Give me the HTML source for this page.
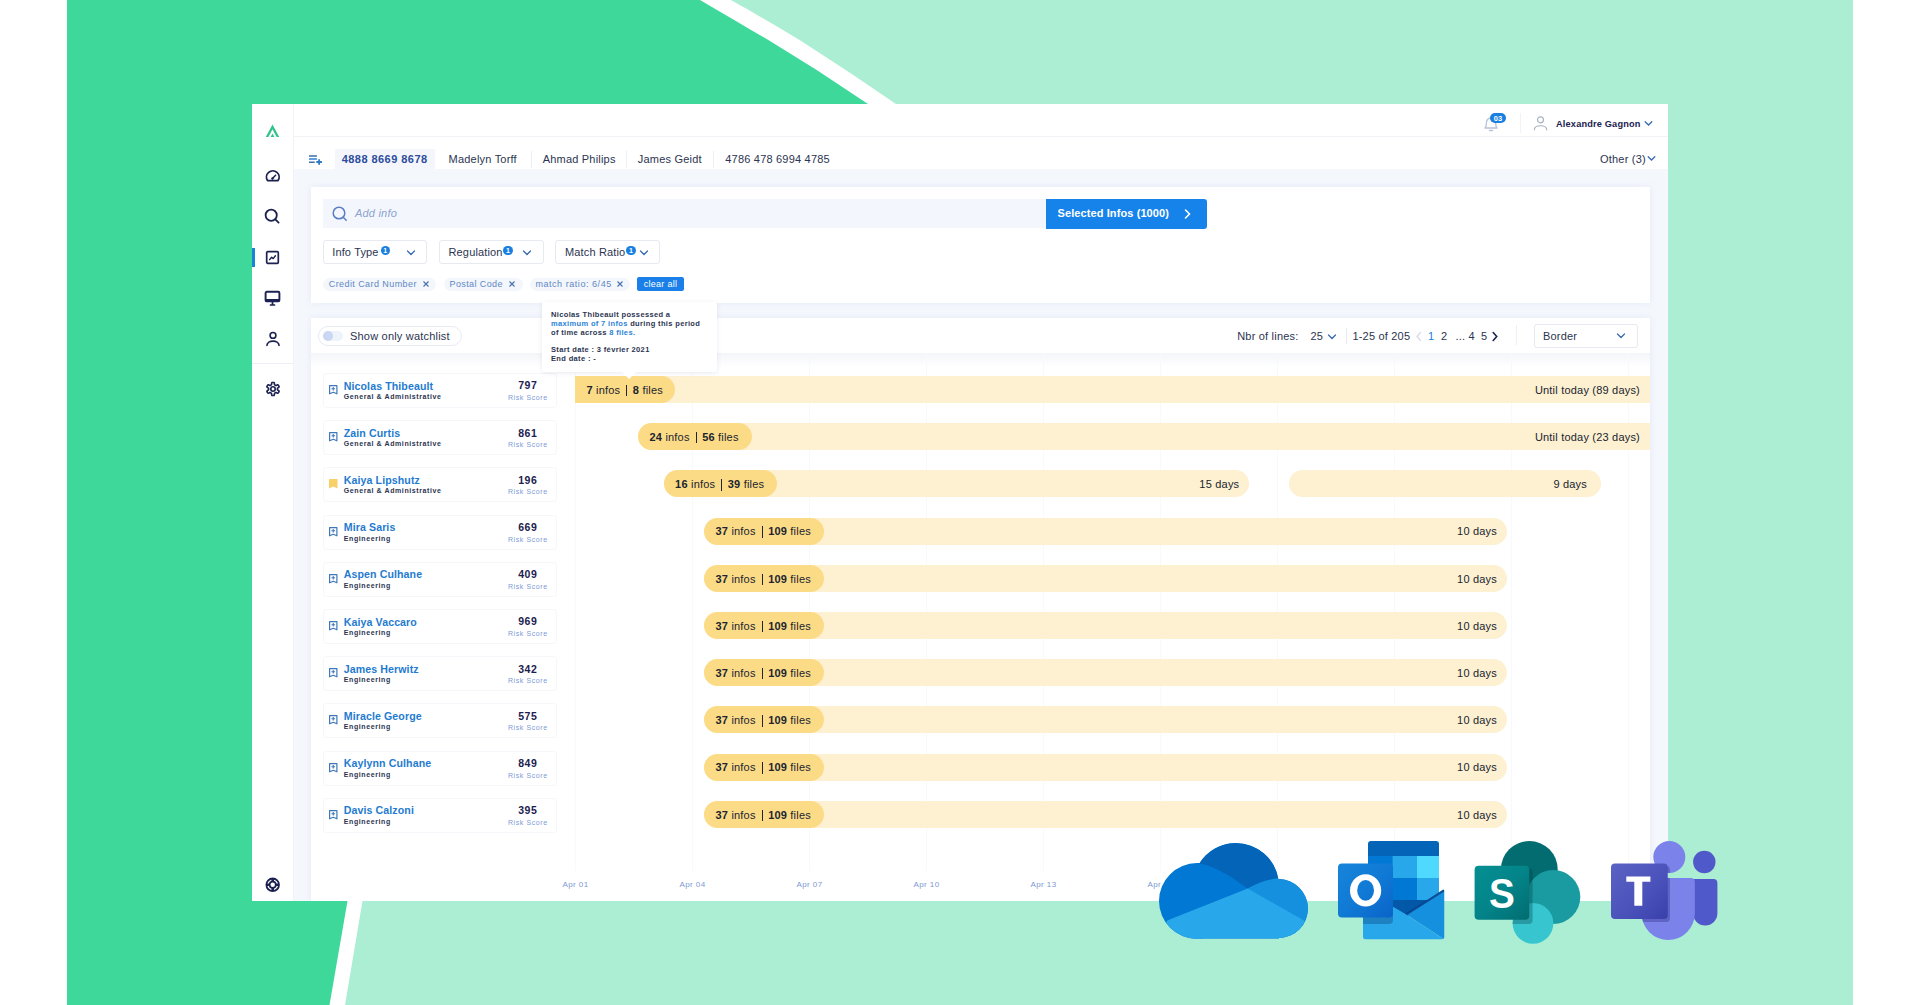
<!DOCTYPE html>
<html><head><meta charset="utf-8">
<style>
*{margin:0;padding:0;box-sizing:border-box}
html,body{width:1920px;height:1005px;overflow:hidden;background:#fff;font-family:"Liberation Sans", sans-serif;color:#232c45}
.a{position:absolute}
.t{position:absolute;white-space:nowrap;line-height:1}
</style></head><body>
<svg class="a" style="left:0;top:0" width="1920" height="1005" viewBox="0 0 1920 1005">
  <rect x="67" y="0" width="1786" height="1005" fill="#fff"/>
  <polygon points="67,0 700,0 717,10 734.2,20 751,30 768.3,40 792.5,55 816.7,70 868,104 868,110 347.5,901 329.5,1005 67,1005" fill="#3ed89a"/>
  <polygon points="730.8,0 748.75,10 774.5,25 799.6,40 826.5,57.5 853.3,75 896,104 896,110 362.5,901 345,1005 1853,1005 1853,0" fill="#abeed3"/>
</svg>
<div class="a" style="left:252px;top:104px;width:1416px;height:797px;background:#f4f7fc;"></div>
<div class="a" style="left:252px;top:104px;width:42px;height:797px;background:#fff;border-right:1px solid #f1f3f8"></div>
<div class="a" style="left:294px;top:104px;width:1374px;height:33px;background:#fff;border-bottom:1px solid #f0f2f6"></div>
<div class="a" style="left:294px;top:137px;width:1374px;height:32px;background:#fff;"></div>
<svg class="a" style="left:264px;top:123px" width="17" height="16" viewBox="0 0 17 16"><path d="M8.5 1.6 L15.2 14 L12.6 14 L8.5 6.3 L4.4 14 L1.8 14 Z" fill="#31c48a"/><path d="M8.5 10.4 L10.4 14 L6.6 14 Z" fill="#31c48a"/></svg>
<svg class="a" style="left:264px;top:168px" width="18" height="16" viewBox="0 0 18 16"><path d="M3.56 12.6 A6.3 6.3 0 1 1 14.04 12.6 Z" fill="none" stroke="#1b2150" stroke-width="1.8" stroke-linejoin="round"/><path d="M8.4 10.6 L11.6 7.2" stroke="#1b2150" stroke-width="1.5" stroke-linecap="round"/><circle cx="8.5" cy="10.5" r="1.2" fill="#1b2150"/></svg>
<svg class="a" style="left:264px;top:208px" width="17" height="17" viewBox="0 0 17 17"><circle cx="7.2" cy="7.2" r="5.6" fill="none" stroke="#1b2150" stroke-width="1.8"/><path d="M11.3 11.3 L14.6 14.6" stroke="#1b2150" stroke-width="1.8" stroke-linecap="round"/></svg>
<div class="a" style="left:252px;top:248px;width:3px;height:19px;background:#1a84d8;"></div>
<svg class="a" style="left:265px;top:250px" width="15" height="15" viewBox="0 0 15 15"><rect x="1.7" y="1.7" width="11.6" height="11.6" rx="1" fill="none" stroke="#1b2150" stroke-width="1.7"/><path d="M4.6 9.6 L6.6 7.2 L8.2 8.6 L10.4 5.8" fill="none" stroke="#1b2150" stroke-width="1.4" stroke-linecap="round" stroke-linejoin="round"/></svg>
<svg class="a" style="left:264px;top:290px" width="17" height="17" viewBox="0 0 17 17"><rect x="1.6" y="1.8" width="13.8" height="9.6" rx="1.2" fill="none" stroke="#1b2150" stroke-width="1.9"/><rect x="1.6" y="9" width="13.8" height="2.6" fill="#1b2150"/><path d="M8.5 12 V14.6 M5.8 15 H11.2" stroke="#1b2150" stroke-width="1.7"/></svg>
<svg class="a" style="left:265px;top:331px" width="16" height="16" viewBox="0 0 16 16"><circle cx="8" cy="4.4" r="2.9" fill="none" stroke="#1b2150" stroke-width="1.6"/><path d="M2 14.3 C2.2 8.6 13.8 8.6 14 14.3" fill="none" stroke="#1b2150" stroke-width="1.7" stroke-linecap="round"/></svg>
<div class="a" style="left:252px;top:363px;width:41px;height:1px;background:#eceff4;"></div>
<svg class="a" style="left:264.8px;top:380.7px" width="16" height="16" viewBox="0 0 16 16"><path d="M8.00 1.45 L8.34 1.46 L8.68 1.49 L9.02 1.53 L9.29 1.92 L9.42 2.69 L9.48 3.45 L9.59 3.85 L9.81 3.93 L10.02 4.04 L10.22 4.15 L10.42 4.27 L10.62 4.40 L10.80 4.54 L11.20 4.44 L11.89 4.11 L12.62 3.84 L13.09 3.88 L13.30 4.15 L13.49 4.43 L13.67 4.72 L13.84 5.03 L13.98 5.34 L14.11 5.65 L13.91 6.08 L13.31 6.58 L12.68 7.00 L12.40 7.30 L12.43 7.53 L12.44 7.77 L12.45 8.00 L12.44 8.23 L12.43 8.47 L12.40 8.70 L12.68 9.00 L13.31 9.42 L13.91 9.92 L14.11 10.35 L13.98 10.66 L13.84 10.97 L13.67 11.27 L13.49 11.57 L13.30 11.85 L13.09 12.12 L12.62 12.16 L11.89 11.89 L11.20 11.56 L10.80 11.46 L10.62 11.60 L10.42 11.73 L10.22 11.85 L10.02 11.96 L9.81 12.07 L9.59 12.15 L9.48 12.55 L9.42 13.31 L9.29 14.08 L9.02 14.47 L8.68 14.51 L8.34 14.54 L8.00 14.55 L7.66 14.54 L7.32 14.51 L6.98 14.47 L6.71 14.08 L6.58 13.31 L6.52 12.55 L6.41 12.15 L6.19 12.07 L5.98 11.96 L5.78 11.85 L5.58 11.73 L5.38 11.60 L5.20 11.46 L4.80 11.56 L4.11 11.89 L3.38 12.16 L2.91 12.12 L2.70 11.85 L2.51 11.57 L2.33 11.28 L2.16 10.97 L2.02 10.66 L1.89 10.35 L2.09 9.92 L2.69 9.42 L3.32 9.00 L3.60 8.70 L3.57 8.47 L3.56 8.23 L3.55 8.00 L3.56 7.77 L3.57 7.53 L3.60 7.30 L3.32 7.00 L2.69 6.58 L2.09 6.08 L1.89 5.65 L2.02 5.34 L2.16 5.03 L2.33 4.72 L2.51 4.43 L2.70 4.15 L2.91 3.88 L3.38 3.84 L4.11 4.11 L4.80 4.44 L5.20 4.54 L5.38 4.40 L5.58 4.27 L5.78 4.15 L5.98 4.04 L6.19 3.93 L6.41 3.85 L6.52 3.45 L6.58 2.69 L6.71 1.92 L6.98 1.53 L7.32 1.49 L7.66 1.46 Z" fill="none" stroke="#1b2150" stroke-width="1.6" stroke-linejoin="round"/><circle cx="8" cy="8" r="2.2" fill="none" stroke="#1b2150" stroke-width="1.6"/></svg>
<svg class="a" style="left:264px;top:876px" width="18" height="18" viewBox="0 0 18 18"><circle cx="8.7" cy="8.8" r="6.3" fill="none" stroke="#1b2150" stroke-width="1.8"/><circle cx="8.7" cy="8.8" r="3.1" fill="none" stroke="#1b2150" stroke-width="1.7"/><path d="M8.7 2.5 V5.8 M8.7 11.8 V15.1 M2.4 8.8 H5.7 M11.7 8.8 H15" stroke="#1b2150" stroke-width="2.6"/></svg>
<svg class="a" style="left:1482px;top:115px" width="18" height="18" viewBox="0 0 18 18"><path d="M3 13 C4.5 11.5 4.2 9 4.5 7 C5 4.2 7 3 9 3 C11 3 13 4.2 13.5 7 C13.8 9 13.5 11.5 15 13 Z" fill="none" stroke="#b7c3da" stroke-width="1.3" stroke-linejoin="round"/><path d="M7.5 15.5 H10.5" stroke="#b7c3da" stroke-width="1.3" stroke-linecap="round"/></svg>
<div class="a" style="left:1490px;top:113px;width:16px;height:10px;background:#1a7fe0;border-radius:5px"></div>
<div class="t" style="left:1498.00px;top:114.95px;font-size:7.5px;color:#fff;font-weight:700;transform:translateX(-50%);">03</div>
<div class="a" style="left:1520px;top:113px;width:1px;height:20px;background:#f2f3f6;"></div>
<svg class="a" style="left:1532px;top:115px" width="17" height="17" viewBox="0 0 17 17"><circle cx="8.5" cy="4.8" r="3" fill="none" stroke="#aab3c4" stroke-width="1.2"/><path d="M2.3 14.8 C2.5 9.4 14.5 9.4 14.7 14.8" fill="none" stroke="#aab3c4" stroke-width="1.2" stroke-linecap="round"/></svg>
<div class="t" style="left:1556.00px;top:119.81px;font-size:9.2px;color:#1b2150;font-weight:700;letter-spacing:0.18px;">Alexandre Gagnon</div>
<svg class="a" style="left:1644px;top:120px" width="9" height="7" viewBox="0 0 9 7"><path d="M1.2 1.8 L4.5 5 L7.8 1.8" fill="none" stroke="#3a6ab0" stroke-width="1.3" stroke-linecap="round"/></svg>
<svg class="a" style="left:307px;top:153px" width="17" height="14" viewBox="0 0 17 14"><path d="M2 2.9 H9.9 M2 9.2 H7.7" stroke="#3a6fa8" stroke-width="1.5"/><path d="M2 6 H9.9" stroke="#2f7fd6" stroke-width="1.5"/><path d="M9.3 9 H14.9 M12.1 6.2 V11.8" stroke="#2d7bc4" stroke-width="1.8"/></svg>
<div class="a" style="left:335px;top:149px;width:100px;height:20px;background:#f4f6fb;"></div>
<div class="t" style="left:341.70px;top:153.79px;font-size:11px;color:#2c4c9c;font-weight:700;letter-spacing:0.45px;">4888 8669 8678</div>
<div class="t" style="left:448.60px;top:153.79px;font-size:11px;color:#2b3450;letter-spacing:0.2px;">Madelyn Torff</div>
<div class="t" style="left:542.70px;top:153.79px;font-size:11px;color:#2b3450;letter-spacing:0.2px;">Ahmad Philips</div>
<div class="t" style="left:637.80px;top:153.79px;font-size:11px;color:#2b3450;letter-spacing:0.2px;">James Geidt</div>
<div class="t" style="left:725.30px;top:153.79px;font-size:11px;color:#2b3450;letter-spacing:0.2px;">4786 478 6994 4785</div>
<div class="a" style="left:531px;top:151px;width:1px;height:17px;background:#eceff4;"></div>
<div class="a" style="left:626px;top:151px;width:1px;height:17px;background:#eceff4;"></div>
<div class="a" style="left:713px;top:151px;width:1px;height:17px;background:#eceff4;"></div>
<div class="t" style="left:1600.00px;top:154.09px;font-size:11px;color:#2b3450;letter-spacing:0.2px;">Other (3)</div>
<svg class="a" style="left:1647px;top:155px" width="9" height="7" viewBox="0 0 9 7"><path d="M1.2 1.8 L4.5 5 L7.8 1.8" fill="none" stroke="#3a6ab0" stroke-width="1.3" stroke-linecap="round"/></svg>
<div class="a" style="left:311px;top:187px;width:1339px;height:116px;background:#fff;box-shadow:0 0 6px rgba(205,213,235,0.35)"></div>
<div class="a" style="left:323px;top:199px;width:723px;height:29px;background:#f3f7fd;"></div>
<svg class="a" style="left:331px;top:205px" width="18" height="18" viewBox="0 0 18 18"><circle cx="8" cy="8" r="5.8" fill="none" stroke="#5a7cc4" stroke-width="1.5"/><path d="M12.2 12.2 L15.2 15.2" stroke="#5a7cc4" stroke-width="1.5" stroke-linecap="round"/></svg>
<div class="t" style="left:355.00px;top:208.19px;font-size:11px;color:#8da2cf;letter-spacing:0.2px;font-style:italic;">Add info</div>
<div class="a" style="left:1046px;top:199px;width:161px;height:30px;background:#1683eb;border-radius:0 3px 3px 0"></div>
<div class="t" style="left:1057.50px;top:208.49px;font-size:11px;color:#fff;font-weight:700;letter-spacing:0.1px;">Selected Infos (1000)</div>
<svg class="a" style="left:1183px;top:208px" width="9" height="12" viewBox="0 0 9 12"><path d="M2.5 2 L6.5 6 L2.5 10" fill="none" stroke="#fff" stroke-width="1.6" stroke-linecap="round"/></svg>
<div class="a" style="left:323px;top:240px;width:104px;height:24px;background:#fff;border:1px solid #e6e9ef;border-radius:3px"></div>
<div class="t" style="left:332.20px;top:246.59px;font-size:11px;color:#2b3450;letter-spacing:0.15px;">Info Type</div>
<div class="a" style="left:380.6px;top:245.7px;width:9.4px;height:9.4px;border-radius:50%;background:#1a7fe0"></div>
<div class="t" style="left:385.30px;top:247.27px;font-size:7px;color:#fff;font-weight:700;transform:translateX(-50%);">1</div>
<svg class="a" style="left:406px;top:249px" width="10" height="8" viewBox="0 0 10 8"><path d="M1.5 2 L5 5.5 L8.5 2" fill="none" stroke="#3a6ab0" stroke-width="1.3" stroke-linecap="round"/></svg>
<div class="a" style="left:439px;top:240px;width:105px;height:24px;background:#fff;border:1px solid #e6e9ef;border-radius:3px"></div>
<div class="t" style="left:448.50px;top:246.59px;font-size:11px;color:#2b3450;letter-spacing:0.15px;">Regulation</div>
<div class="a" style="left:503.3px;top:245.7px;width:9.4px;height:9.4px;border-radius:50%;background:#1a7fe0"></div>
<div class="t" style="left:508.00px;top:247.27px;font-size:7px;color:#fff;font-weight:700;transform:translateX(-50%);">1</div>
<svg class="a" style="left:522px;top:249px" width="10" height="8" viewBox="0 0 10 8"><path d="M1.5 2 L5 5.5 L8.5 2" fill="none" stroke="#3a6ab0" stroke-width="1.3" stroke-linecap="round"/></svg>
<div class="a" style="left:555px;top:240px;width:105px;height:24px;background:#fff;border:1px solid #e6e9ef;border-radius:3px"></div>
<div class="t" style="left:565.00px;top:246.59px;font-size:11px;color:#2b3450;letter-spacing:0.15px;">Match Ratio</div>
<div class="a" style="left:626.3px;top:245.7px;width:9.4px;height:9.4px;border-radius:50%;background:#1a7fe0"></div>
<div class="t" style="left:631.00px;top:247.27px;font-size:7px;color:#fff;font-weight:700;transform:translateX(-50%);">1</div>
<svg class="a" style="left:639px;top:249px" width="10" height="8" viewBox="0 0 10 8"><path d="M1.5 2 L5 5.5 L8.5 2" fill="none" stroke="#3a6ab0" stroke-width="1.3" stroke-linecap="round"/></svg>
<div class="a" style="left:323px;top:278px;width:113px;height:13px;background:#f3f6fb;border-radius:7px"></div>
<div class="t" style="left:328.75px;top:279.78px;font-size:9px;color:#5f88c4;letter-spacing:0.42px;">Credit Card Number</div>
<svg class="a" style="left:422px;top:280px" width="8" height="8" viewBox="0 0 8 8"><path d="M1.5 1.5 L6.5 6.5 M6.5 1.5 L1.5 6.5" stroke="#4a72ad" stroke-width="1.15"/></svg>
<div class="a" style="left:444px;top:278px;width:79px;height:13px;background:#f3f6fb;border-radius:7px"></div>
<div class="t" style="left:449.60px;top:279.78px;font-size:9px;color:#5f88c4;letter-spacing:0.38px;">Postal Code</div>
<svg class="a" style="left:507.5px;top:280px" width="8" height="8" viewBox="0 0 8 8"><path d="M1.5 1.5 L6.5 6.5 M6.5 1.5 L1.5 6.5" stroke="#4a72ad" stroke-width="1.15"/></svg>
<div class="a" style="left:530px;top:278px;width:100px;height:13px;background:#f3f6fb;border-radius:7px"></div>
<div class="t" style="left:535.40px;top:279.78px;font-size:9px;color:#5f88c4;letter-spacing:0.55px;">match ratio: 6/45</div>
<svg class="a" style="left:616px;top:280px" width="8" height="8" viewBox="0 0 8 8"><path d="M1.5 1.5 L6.5 6.5 M6.5 1.5 L1.5 6.5" stroke="#4a72ad" stroke-width="1.15"/></svg>
<div class="a" style="left:637px;top:277px;width:47px;height:14px;background:#1a7fe8;border-radius:2px"></div>
<div class="t" style="left:660.50px;top:279.78px;font-size:9px;color:#fff;letter-spacing:0.3px;transform:translateX(-50%);">clear all</div>
<div class="a" style="left:311px;top:318px;width:1339px;height:583px;background:#fff;box-shadow:0 0 6px rgba(205,213,235,0.35);clip-path:inset(-10px -10px 0 -10px)"></div>
<div class="a" style="left:311px;top:353px;width:1339px;height:14px;background:linear-gradient(#f4f5f9,#fff);"></div>
<div class="a" style="left:318px;top:326px;width:144px;height:20px;background:#fff;border:1px solid #e6eaf2;border-radius:10px"></div>
<div class="a" style="left:323px;top:331px;width:20px;height:10px;background:#eef2fa;border-radius:5px"></div>
<div class="a" style="left:323px;top:331px;width:10px;height:10px;border-radius:50%;background:#c9d7f2"></div>
<div class="t" style="left:350.00px;top:331.19px;font-size:11px;color:#2b3450;letter-spacing:0.2px;">Show only watchlist</div>
<div class="t" style="left:1237.20px;top:330.89px;font-size:11px;color:#2b3450;letter-spacing:0.2px;">Nbr of lines:</div>
<div class="t" style="left:1310.50px;top:330.89px;font-size:11px;color:#2b3450;letter-spacing:0.2px;">25</div>
<svg class="a" style="left:1327px;top:333px" width="10" height="8" viewBox="0 0 10 8"><path d="M1.5 2 L5 5.5 L8.5 2" fill="none" stroke="#3a6ab0" stroke-width="1.3" stroke-linecap="round"/></svg>
<div class="a" style="left:1346px;top:328px;width:1px;height:16px;background:#e6e9ef;"></div>
<div class="t" style="left:1352.40px;top:330.89px;font-size:11px;color:#2b3450;letter-spacing:0.2px;">1-25 of 205</div>
<svg class="a" style="left:1415px;top:331px" width="8" height="11" viewBox="0 0 8 11"><path d="M5.5 1.5 L2 5.5 L5.5 9.5" fill="none" stroke="#d5dbe6" stroke-width="1.3" stroke-linecap="round"/></svg>
<div class="t" style="left:1428.00px;top:330.89px;font-size:11px;color:#1a7fe0;">1</div>
<div class="t" style="left:1441.00px;top:330.89px;font-size:11px;color:#2b3450;">2</div>
<div class="t" style="left:1455.60px;top:330.89px;font-size:11px;color:#2b3450;letter-spacing:0.2px;">... 4</div>
<div class="t" style="left:1481.00px;top:330.89px;font-size:11px;color:#2b3450;">5</div>
<svg class="a" style="left:1491px;top:331px" width="8" height="11" viewBox="0 0 8 11"><path d="M2.2 1.5 L5.7 5.5 L2.2 9.5" fill="none" stroke="#1b2150" stroke-width="1.6" stroke-linecap="round"/></svg>
<div class="a" style="left:1516px;top:325px;width:1px;height:20px;background:#eef0f4;"></div>
<div class="a" style="left:1534px;top:324px;width:104px;height:24px;background:#fff;border:1px solid #e6e9ef;border-radius:3px"></div>
<div class="t" style="left:1543.00px;top:330.89px;font-size:11px;color:#2b3450;letter-spacing:0.2px;">Border</div>
<svg class="a" style="left:1616px;top:332px" width="10" height="8" viewBox="0 0 10 8"><path d="M1.5 2 L5 5.5 L8.5 2" fill="none" stroke="#3a6ab0" stroke-width="1.3" stroke-linecap="round"/></svg>
<div class="a" style="left:575px;top:353px;width:1px;height:518px;background:#f8f9fb;"></div>
<div class="a" style="left:692px;top:353px;width:1px;height:518px;background:#f8f9fb;"></div>
<div class="a" style="left:809px;top:353px;width:1px;height:518px;background:#f8f9fb;"></div>
<div class="a" style="left:926px;top:353px;width:1px;height:518px;background:#f8f9fb;"></div>
<div class="a" style="left:1043px;top:353px;width:1px;height:518px;background:#f8f9fb;"></div>
<div class="a" style="left:1160px;top:353px;width:1px;height:518px;background:#f8f9fb;"></div>
<div class="a" style="left:1277px;top:353px;width:1px;height:518px;background:#f8f9fb;"></div>
<div class="a" style="left:1394px;top:353px;width:1px;height:518px;background:#f8f9fb;"></div>
<div class="a" style="left:1511px;top:353px;width:1px;height:518px;background:#f8f9fb;"></div>
<div class="a" style="left:1628px;top:353px;width:1px;height:518px;background:#f8f9fb;"></div>
<div class="a" style="left:323px;top:373.0px;width:234px;height:35px;background:#fff;border:1px solid #f6f7fa;border-radius:3px"></div>
<svg class="a" style="left:328px;top:384px" width="10" height="11" viewBox="0 0 10 11"><path d="M1.6 1.6 H8.9 V9.8 L5.25 8.3 L1.6 9.8 Z" fill="none" stroke="#3f78b8" stroke-width="1.2" stroke-linejoin="round"/><path d="M5.25 2.9 V6.5 M3.45 4.7 H7.05" stroke="#3f78b8" stroke-width="1.1"/></svg>
<div class="t" style="left:343.75px;top:380.63px;font-size:10.6px;color:#1f7bd0;font-weight:700;letter-spacing:0.1px;">Nicolas Thibeault</div>
<div class="t" style="left:343.75px;top:393.07px;font-size:7px;color:#2b3450;font-weight:700;letter-spacing:0.6px;">General &amp; Administrative</div>
<div class="t" style="left:527.80px;top:380.31px;font-size:10.5px;color:#1b2150;font-weight:700;letter-spacing:0.6px;transform:translateX(-50%);">797</div>
<div class="t" style="left:527.80px;top:394.07px;font-size:7px;color:#7d9ad8;letter-spacing:0.6px;transform:translateX(-50%);">Risk Score</div>
<div class="a" style="left:575px;top:376.0px;width:1075.0px;height:27px;background:#fdf1d2;border-radius:0 0 0 0"></div>
<div class="a" style="left:575px;top:376.0px;width:100.0px;height:27px;background:#fcdb87;border-radius:0 13.5px 13.5px 0"></div>
<div class="t" style="left:586.5px;top:384.79px;font-size:11px;color:#20242f;letter-spacing:0.2px"><b>7</b> infos<span style="display:inline-block;width:1px;height:11.5px;background:#20242f;vertical-align:-2.5px;margin:0 5.5px 0 6px"></span><b>8</b> files</div>
<div class="t" style="left:1640.00px;top:384.79px;font-size:11px;color:#20242f;letter-spacing:0.2px;transform:translateX(-100%);">Until today (89 days)</div>
<div class="a" style="left:323px;top:420.2px;width:234px;height:35px;background:#fff;border:1px solid #f6f7fa;border-radius:3px"></div>
<svg class="a" style="left:328px;top:431px" width="10" height="11" viewBox="0 0 10 11"><path d="M1.6 1.6 H8.9 V9.8 L5.25 8.3 L1.6 9.8 Z" fill="none" stroke="#3f78b8" stroke-width="1.2" stroke-linejoin="round"/><path d="M5.25 2.9 V6.5 M3.45 4.7 H7.05" stroke="#3f78b8" stroke-width="1.1"/></svg>
<div class="t" style="left:343.75px;top:427.83px;font-size:10.6px;color:#1f7bd0;font-weight:700;letter-spacing:0.1px;">Zain Curtis</div>
<div class="t" style="left:343.75px;top:440.27px;font-size:7px;color:#2b3450;font-weight:700;letter-spacing:0.6px;">General &amp; Administrative</div>
<div class="t" style="left:527.80px;top:427.51px;font-size:10.5px;color:#1b2150;font-weight:700;letter-spacing:0.6px;transform:translateX(-50%);">861</div>
<div class="t" style="left:527.80px;top:441.27px;font-size:7px;color:#7d9ad8;letter-spacing:0.6px;transform:translateX(-50%);">Risk Score</div>
<div class="a" style="left:638px;top:423.2px;width:1012.0px;height:27px;background:#fdf1d2;border-radius:13.5px 0 0 13.5px"></div>
<div class="a" style="left:638px;top:423.2px;width:114.0px;height:27px;background:#fcdb87;border-radius:13.5px 13.5px 13.5px 13.5px"></div>
<div class="t" style="left:649.5px;top:431.99px;font-size:11px;color:#20242f;letter-spacing:0.2px"><b>24</b> infos<span style="display:inline-block;width:1px;height:11.5px;background:#20242f;vertical-align:-2.5px;margin:0 5.5px 0 6px"></span><b>56</b> files</div>
<div class="t" style="left:1640.00px;top:431.99px;font-size:11px;color:#20242f;letter-spacing:0.2px;transform:translateX(-100%);">Until today (23 days)</div>
<div class="a" style="left:323px;top:467.4px;width:234px;height:35px;background:#fff;border:1px solid #f6f7fa;border-radius:3px"></div>
<svg class="a" style="left:328px;top:478px" width="10" height="11" viewBox="0 0 10 11"><path d="M1 1 H9.5 V10.4 L5.25 8.4 L1 10.4 Z" fill="#f8d068"/></svg>
<div class="t" style="left:343.75px;top:475.03px;font-size:10.6px;color:#1f7bd0;font-weight:700;letter-spacing:0.1px;">Kaiya Lipshutz</div>
<div class="t" style="left:343.75px;top:487.47px;font-size:7px;color:#2b3450;font-weight:700;letter-spacing:0.6px;">General &amp; Administrative</div>
<div class="t" style="left:527.80px;top:474.71px;font-size:10.5px;color:#1b2150;font-weight:700;letter-spacing:0.6px;transform:translateX(-50%);">196</div>
<div class="t" style="left:527.80px;top:488.47px;font-size:7px;color:#7d9ad8;letter-spacing:0.6px;transform:translateX(-50%);">Risk Score</div>
<div class="a" style="left:663.6px;top:470.4px;width:585.7px;height:27px;background:#fdf1d2;border-radius:13.5px 13.5px 13.5px 13.5px"></div>
<div class="a" style="left:663.6px;top:470.4px;width:113.4px;height:27px;background:#fcdb87;border-radius:13.5px 13.5px 13.5px 13.5px"></div>
<div class="t" style="left:675.1px;top:479.19px;font-size:11px;color:#20242f;letter-spacing:0.2px"><b>16</b> infos<span style="display:inline-block;width:1px;height:11.5px;background:#20242f;vertical-align:-2.5px;margin:0 5.5px 0 6px"></span><b>39</b> files</div>
<div class="t" style="left:1239.30px;top:479.19px;font-size:11px;color:#20242f;letter-spacing:0.2px;transform:translateX(-100%);">15 days</div>
<div class="a" style="left:1289px;top:470.4px;width:312.0px;height:27px;background:#fdf1d2;border-radius:13.5px 13.5px 13.5px 13.5px"></div>
<div class="t" style="left:1587.00px;top:479.19px;font-size:11px;color:#20242f;letter-spacing:0.2px;transform:translateX(-100%);">9 days</div>
<div class="a" style="left:323px;top:514.6px;width:234px;height:35px;background:#fff;border:1px solid #f6f7fa;border-radius:3px"></div>
<svg class="a" style="left:328px;top:526px" width="10" height="11" viewBox="0 0 10 11"><path d="M1.6 1.6 H8.9 V9.8 L5.25 8.3 L1.6 9.8 Z" fill="none" stroke="#3f78b8" stroke-width="1.2" stroke-linejoin="round"/><path d="M5.25 2.9 V6.5 M3.45 4.7 H7.05" stroke="#3f78b8" stroke-width="1.1"/></svg>
<div class="t" style="left:343.75px;top:522.23px;font-size:10.6px;color:#1f7bd0;font-weight:700;letter-spacing:0.1px;">Mira Saris</div>
<div class="t" style="left:343.75px;top:534.67px;font-size:7px;color:#2b3450;font-weight:700;letter-spacing:0.6px;">Engineering</div>
<div class="t" style="left:527.80px;top:521.91px;font-size:10.5px;color:#1b2150;font-weight:700;letter-spacing:0.6px;transform:translateX(-50%);">669</div>
<div class="t" style="left:527.80px;top:535.67px;font-size:7px;color:#7d9ad8;letter-spacing:0.6px;transform:translateX(-50%);">Risk Score</div>
<div class="a" style="left:704px;top:517.6px;width:803.0px;height:27px;background:#fdf1d2;border-radius:13.5px 13.5px 13.5px 13.5px"></div>
<div class="a" style="left:704px;top:517.6px;width:120.0px;height:27px;background:#fcdb87;border-radius:13.5px 13.5px 13.5px 13.5px"></div>
<div class="t" style="left:715.5px;top:526.39px;font-size:11px;color:#20242f;letter-spacing:0.2px"><b>37</b> infos<span style="display:inline-block;width:1px;height:11.5px;background:#20242f;vertical-align:-2.5px;margin:0 5.5px 0 6px"></span><b>109</b> files</div>
<div class="t" style="left:1497.00px;top:526.39px;font-size:11px;color:#20242f;letter-spacing:0.2px;transform:translateX(-100%);">10 days</div>
<div class="a" style="left:323px;top:561.8px;width:234px;height:35px;background:#fff;border:1px solid #f6f7fa;border-radius:3px"></div>
<svg class="a" style="left:328px;top:573px" width="10" height="11" viewBox="0 0 10 11"><path d="M1.6 1.6 H8.9 V9.8 L5.25 8.3 L1.6 9.8 Z" fill="none" stroke="#3f78b8" stroke-width="1.2" stroke-linejoin="round"/><path d="M5.25 2.9 V6.5 M3.45 4.7 H7.05" stroke="#3f78b8" stroke-width="1.1"/></svg>
<div class="t" style="left:343.75px;top:569.43px;font-size:10.6px;color:#1f7bd0;font-weight:700;letter-spacing:0.1px;">Aspen Culhane</div>
<div class="t" style="left:343.75px;top:581.87px;font-size:7px;color:#2b3450;font-weight:700;letter-spacing:0.6px;">Engineering</div>
<div class="t" style="left:527.80px;top:569.11px;font-size:10.5px;color:#1b2150;font-weight:700;letter-spacing:0.6px;transform:translateX(-50%);">409</div>
<div class="t" style="left:527.80px;top:582.87px;font-size:7px;color:#7d9ad8;letter-spacing:0.6px;transform:translateX(-50%);">Risk Score</div>
<div class="a" style="left:704px;top:564.8px;width:803.0px;height:27px;background:#fdf1d2;border-radius:13.5px 13.5px 13.5px 13.5px"></div>
<div class="a" style="left:704px;top:564.8px;width:120.0px;height:27px;background:#fcdb87;border-radius:13.5px 13.5px 13.5px 13.5px"></div>
<div class="t" style="left:715.5px;top:573.59px;font-size:11px;color:#20242f;letter-spacing:0.2px"><b>37</b> infos<span style="display:inline-block;width:1px;height:11.5px;background:#20242f;vertical-align:-2.5px;margin:0 5.5px 0 6px"></span><b>109</b> files</div>
<div class="t" style="left:1497.00px;top:573.59px;font-size:11px;color:#20242f;letter-spacing:0.2px;transform:translateX(-100%);">10 days</div>
<div class="a" style="left:323px;top:609.0px;width:234px;height:35px;background:#fff;border:1px solid #f6f7fa;border-radius:3px"></div>
<svg class="a" style="left:328px;top:620px" width="10" height="11" viewBox="0 0 10 11"><path d="M1.6 1.6 H8.9 V9.8 L5.25 8.3 L1.6 9.8 Z" fill="none" stroke="#3f78b8" stroke-width="1.2" stroke-linejoin="round"/><path d="M5.25 2.9 V6.5 M3.45 4.7 H7.05" stroke="#3f78b8" stroke-width="1.1"/></svg>
<div class="t" style="left:343.75px;top:616.63px;font-size:10.6px;color:#1f7bd0;font-weight:700;letter-spacing:0.1px;">Kaiya Vaccaro</div>
<div class="t" style="left:343.75px;top:629.07px;font-size:7px;color:#2b3450;font-weight:700;letter-spacing:0.6px;">Engineering</div>
<div class="t" style="left:527.80px;top:616.31px;font-size:10.5px;color:#1b2150;font-weight:700;letter-spacing:0.6px;transform:translateX(-50%);">969</div>
<div class="t" style="left:527.80px;top:630.07px;font-size:7px;color:#7d9ad8;letter-spacing:0.6px;transform:translateX(-50%);">Risk Score</div>
<div class="a" style="left:704px;top:612.0px;width:803.0px;height:27px;background:#fdf1d2;border-radius:13.5px 13.5px 13.5px 13.5px"></div>
<div class="a" style="left:704px;top:612.0px;width:120.0px;height:27px;background:#fcdb87;border-radius:13.5px 13.5px 13.5px 13.5px"></div>
<div class="t" style="left:715.5px;top:620.79px;font-size:11px;color:#20242f;letter-spacing:0.2px"><b>37</b> infos<span style="display:inline-block;width:1px;height:11.5px;background:#20242f;vertical-align:-2.5px;margin:0 5.5px 0 6px"></span><b>109</b> files</div>
<div class="t" style="left:1497.00px;top:620.79px;font-size:11px;color:#20242f;letter-spacing:0.2px;transform:translateX(-100%);">10 days</div>
<div class="a" style="left:323px;top:656.2px;width:234px;height:35px;background:#fff;border:1px solid #f6f7fa;border-radius:3px"></div>
<svg class="a" style="left:328px;top:667px" width="10" height="11" viewBox="0 0 10 11"><path d="M1.6 1.6 H8.9 V9.8 L5.25 8.3 L1.6 9.8 Z" fill="none" stroke="#3f78b8" stroke-width="1.2" stroke-linejoin="round"/><path d="M5.25 2.9 V6.5 M3.45 4.7 H7.05" stroke="#3f78b8" stroke-width="1.1"/></svg>
<div class="t" style="left:343.75px;top:663.83px;font-size:10.6px;color:#1f7bd0;font-weight:700;letter-spacing:0.1px;">James Herwitz</div>
<div class="t" style="left:343.75px;top:676.27px;font-size:7px;color:#2b3450;font-weight:700;letter-spacing:0.6px;">Engineering</div>
<div class="t" style="left:527.80px;top:663.51px;font-size:10.5px;color:#1b2150;font-weight:700;letter-spacing:0.6px;transform:translateX(-50%);">342</div>
<div class="t" style="left:527.80px;top:677.27px;font-size:7px;color:#7d9ad8;letter-spacing:0.6px;transform:translateX(-50%);">Risk Score</div>
<div class="a" style="left:704px;top:659.2px;width:803.0px;height:27px;background:#fdf1d2;border-radius:13.5px 13.5px 13.5px 13.5px"></div>
<div class="a" style="left:704px;top:659.2px;width:120.0px;height:27px;background:#fcdb87;border-radius:13.5px 13.5px 13.5px 13.5px"></div>
<div class="t" style="left:715.5px;top:667.99px;font-size:11px;color:#20242f;letter-spacing:0.2px"><b>37</b> infos<span style="display:inline-block;width:1px;height:11.5px;background:#20242f;vertical-align:-2.5px;margin:0 5.5px 0 6px"></span><b>109</b> files</div>
<div class="t" style="left:1497.00px;top:667.99px;font-size:11px;color:#20242f;letter-spacing:0.2px;transform:translateX(-100%);">10 days</div>
<div class="a" style="left:323px;top:703.4px;width:234px;height:35px;background:#fff;border:1px solid #f6f7fa;border-radius:3px"></div>
<svg class="a" style="left:328px;top:714px" width="10" height="11" viewBox="0 0 10 11"><path d="M1.6 1.6 H8.9 V9.8 L5.25 8.3 L1.6 9.8 Z" fill="none" stroke="#3f78b8" stroke-width="1.2" stroke-linejoin="round"/><path d="M5.25 2.9 V6.5 M3.45 4.7 H7.05" stroke="#3f78b8" stroke-width="1.1"/></svg>
<div class="t" style="left:343.75px;top:711.03px;font-size:10.6px;color:#1f7bd0;font-weight:700;letter-spacing:0.1px;">Miracle George</div>
<div class="t" style="left:343.75px;top:723.47px;font-size:7px;color:#2b3450;font-weight:700;letter-spacing:0.6px;">Engineering</div>
<div class="t" style="left:527.80px;top:710.71px;font-size:10.5px;color:#1b2150;font-weight:700;letter-spacing:0.6px;transform:translateX(-50%);">575</div>
<div class="t" style="left:527.80px;top:724.47px;font-size:7px;color:#7d9ad8;letter-spacing:0.6px;transform:translateX(-50%);">Risk Score</div>
<div class="a" style="left:704px;top:706.4px;width:803.0px;height:27px;background:#fdf1d2;border-radius:13.5px 13.5px 13.5px 13.5px"></div>
<div class="a" style="left:704px;top:706.4px;width:120.0px;height:27px;background:#fcdb87;border-radius:13.5px 13.5px 13.5px 13.5px"></div>
<div class="t" style="left:715.5px;top:715.19px;font-size:11px;color:#20242f;letter-spacing:0.2px"><b>37</b> infos<span style="display:inline-block;width:1px;height:11.5px;background:#20242f;vertical-align:-2.5px;margin:0 5.5px 0 6px"></span><b>109</b> files</div>
<div class="t" style="left:1497.00px;top:715.19px;font-size:11px;color:#20242f;letter-spacing:0.2px;transform:translateX(-100%);">10 days</div>
<div class="a" style="left:323px;top:750.6px;width:234px;height:35px;background:#fff;border:1px solid #f6f7fa;border-radius:3px"></div>
<svg class="a" style="left:328px;top:762px" width="10" height="11" viewBox="0 0 10 11"><path d="M1.6 1.6 H8.9 V9.8 L5.25 8.3 L1.6 9.8 Z" fill="none" stroke="#3f78b8" stroke-width="1.2" stroke-linejoin="round"/><path d="M5.25 2.9 V6.5 M3.45 4.7 H7.05" stroke="#3f78b8" stroke-width="1.1"/></svg>
<div class="t" style="left:343.75px;top:758.23px;font-size:10.6px;color:#1f7bd0;font-weight:700;letter-spacing:0.1px;">Kaylynn Culhane</div>
<div class="t" style="left:343.75px;top:770.67px;font-size:7px;color:#2b3450;font-weight:700;letter-spacing:0.6px;">Engineering</div>
<div class="t" style="left:527.80px;top:757.91px;font-size:10.5px;color:#1b2150;font-weight:700;letter-spacing:0.6px;transform:translateX(-50%);">849</div>
<div class="t" style="left:527.80px;top:771.67px;font-size:7px;color:#7d9ad8;letter-spacing:0.6px;transform:translateX(-50%);">Risk Score</div>
<div class="a" style="left:704px;top:753.6px;width:803.0px;height:27px;background:#fdf1d2;border-radius:13.5px 13.5px 13.5px 13.5px"></div>
<div class="a" style="left:704px;top:753.6px;width:120.0px;height:27px;background:#fcdb87;border-radius:13.5px 13.5px 13.5px 13.5px"></div>
<div class="t" style="left:715.5px;top:762.39px;font-size:11px;color:#20242f;letter-spacing:0.2px"><b>37</b> infos<span style="display:inline-block;width:1px;height:11.5px;background:#20242f;vertical-align:-2.5px;margin:0 5.5px 0 6px"></span><b>109</b> files</div>
<div class="t" style="left:1497.00px;top:762.39px;font-size:11px;color:#20242f;letter-spacing:0.2px;transform:translateX(-100%);">10 days</div>
<div class="a" style="left:323px;top:797.8px;width:234px;height:35px;background:#fff;border:1px solid #f6f7fa;border-radius:3px"></div>
<svg class="a" style="left:328px;top:809px" width="10" height="11" viewBox="0 0 10 11"><path d="M1.6 1.6 H8.9 V9.8 L5.25 8.3 L1.6 9.8 Z" fill="none" stroke="#3f78b8" stroke-width="1.2" stroke-linejoin="round"/><path d="M5.25 2.9 V6.5 M3.45 4.7 H7.05" stroke="#3f78b8" stroke-width="1.1"/></svg>
<div class="t" style="left:343.75px;top:805.43px;font-size:10.6px;color:#1f7bd0;font-weight:700;letter-spacing:0.1px;">Davis Calzoni</div>
<div class="t" style="left:343.75px;top:817.87px;font-size:7px;color:#2b3450;font-weight:700;letter-spacing:0.6px;">Engineering</div>
<div class="t" style="left:527.80px;top:805.11px;font-size:10.5px;color:#1b2150;font-weight:700;letter-spacing:0.6px;transform:translateX(-50%);">395</div>
<div class="t" style="left:527.80px;top:818.87px;font-size:7px;color:#7d9ad8;letter-spacing:0.6px;transform:translateX(-50%);">Risk Score</div>
<div class="a" style="left:704px;top:800.8px;width:803.0px;height:27px;background:#fdf1d2;border-radius:13.5px 13.5px 13.5px 13.5px"></div>
<div class="a" style="left:704px;top:800.8px;width:120.0px;height:27px;background:#fcdb87;border-radius:13.5px 13.5px 13.5px 13.5px"></div>
<div class="t" style="left:715.5px;top:809.59px;font-size:11px;color:#20242f;letter-spacing:0.2px"><b>37</b> infos<span style="display:inline-block;width:1px;height:11.5px;background:#20242f;vertical-align:-2.5px;margin:0 5.5px 0 6px"></span><b>109</b> files</div>
<div class="t" style="left:1497.00px;top:809.59px;font-size:11px;color:#20242f;letter-spacing:0.2px;transform:translateX(-100%);">10 days</div>
<div class="t" style="left:575.50px;top:881.23px;font-size:8px;color:#7b98d4;letter-spacing:0.4px;transform:translateX(-50%);">Apr 01</div>
<div class="t" style="left:692.50px;top:881.23px;font-size:8px;color:#7b98d4;letter-spacing:0.4px;transform:translateX(-50%);">Apr 04</div>
<div class="t" style="left:809.50px;top:881.23px;font-size:8px;color:#7b98d4;letter-spacing:0.4px;transform:translateX(-50%);">Apr 07</div>
<div class="t" style="left:926.50px;top:881.23px;font-size:8px;color:#7b98d4;letter-spacing:0.4px;transform:translateX(-50%);">Apr 10</div>
<div class="t" style="left:1043.50px;top:881.23px;font-size:8px;color:#7b98d4;letter-spacing:0.4px;transform:translateX(-50%);">Apr 13</div>
<div class="t" style="left:1160.50px;top:881.23px;font-size:8px;color:#7b98d4;letter-spacing:0.4px;transform:translateX(-50%);">Apr 16</div>
<div class="t" style="left:1277.50px;top:881.23px;font-size:8px;color:#7b98d4;letter-spacing:0.4px;transform:translateX(-50%);">Apr 19</div>
<div class="t" style="left:1394.50px;top:881.23px;font-size:8px;color:#7b98d4;letter-spacing:0.4px;transform:translateX(-50%);">Apr 22</div>
<div class="t" style="left:1511.50px;top:881.23px;font-size:8px;color:#7b98d4;letter-spacing:0.4px;transform:translateX(-50%);">Apr 25</div>
<div class="t" style="left:1628.50px;top:881.23px;font-size:8px;color:#7b98d4;letter-spacing:0.4px;transform:translateX(-50%);">Apr 28</div>
<div class="a" style="left:542px;top:302px;width:175px;height:70px;background:#fff;border-radius:2px;box-shadow:0 1px 4px rgba(150,160,190,0.22)"></div>
<div class="a" style="left:624px;top:367px;width:10px;height:10px;background:#fff;transform:rotate(45deg)"></div>
<div class="t" style="left:551.00px;top:311.15px;font-size:7.5px;color:#2b3450;font-weight:700;letter-spacing:0.35px;">Nicolas Thibeault possessed a</div>
<div class="t" style="left:551.00px;top:320.15px;font-size:7.5px;color:#2b3450;font-weight:700;letter-spacing:0.35px;"><span style="color:#2a83d8">maximum of 7 infos</span> during this period</div>
<div class="t" style="left:551.00px;top:329.15px;font-size:7.5px;color:#2b3450;font-weight:700;letter-spacing:0.35px;">of time across <span style="color:#2a83d8">8 files.</span></div>
<div class="t" style="left:551.00px;top:346.45px;font-size:7.5px;color:#2b3450;font-weight:700;letter-spacing:0.35px;">Start date : 3 f&eacute;vrier 2021</div>
<div class="t" style="left:551.00px;top:355.45px;font-size:7.5px;color:#2b3450;font-weight:700;letter-spacing:0.35px;">End date : -</div>
<svg class="a" style="left:0;top:0" width="1920" height="1005" viewBox="0 0 1920 1005">
<defs>
  <clipPath id="odsil"><circle cx="38" cy="58" r="38"/><circle cx="77" cy="43" r="43"/><circle cx="119.5" cy="65.5" r="29.5"/><rect x="38" y="45" width="82" height="50.5"/></clipPath>
  <clipPath id="odtop"><circle cx="77" cy="43" r="43"/></clipPath>
  <linearGradient id="olg" x1="0" y1="0" x2="1" y2="1"><stop offset="0" stop-color="#1784d9"/><stop offset="0.5" stop-color="#107ad5"/><stop offset="1" stop-color="#0a63c9"/></linearGradient>
  <linearGradient id="spg" x1="0" y1="0" x2="1" y2="1"><stop offset="0" stop-color="#058f92"/><stop offset="0.5" stop-color="#038489"/><stop offset="1" stop-color="#026d71"/></linearGradient>
  <linearGradient id="tmg" x1="0" y1="0" x2="1" y2="1"><stop offset="0" stop-color="#5a62c3"/><stop offset="0.5" stop-color="#4d55bd"/><stop offset="1" stop-color="#3940ab"/></linearGradient>
  <clipPath id="spc"><circle cx="54.7" cy="28.4" r="28.4"/><circle cx="78.7" cy="56" r="27"/><circle cx="58.4" cy="82.3" r="20.4"/></clipPath>
  <clipPath id="tmc"><circle cx="58.3" cy="16" r="16"/><path d="M30.6 37 H79.8 A4 4 0 0 1 83.8 41 V72.4 A26.6 26.6 0 0 1 30.6 72.4 Z"/></clipPath>
  <clipPath id="olenv2"><rect x="25" y="48" width="81.5" height="50.5"/><rect x="30" y="0" width="71" height="75"/></clipPath>
  <clipPath id="olenv"><rect x="25" y="48" width="81.5" height="50.5" rx="3"/></clipPath>
</defs>
<!-- OneDrive -->
<g transform="translate(1159,843)">
  <g clip-path="url(#odsil)">
    <rect x="-5" y="-5" width="160" height="110" fill="#0078d4"/>
    <path d="M30 20 L38 20.4 Q56 21 88.7 45.6 Q103 37 120 35.2 L130 20 L130 -10 L10 -10 L10 8 Z" fill="#0364b8" clip-path="url(#odtop)"/>
    <circle cx="119.5" cy="65.5" r="29.5" fill="#1490df"/>
    <path d="M88.7 45.6 Q103 37 120 35.2 L125 60 L110 80 Z" fill="#1490df"/>
    <polygon points="8.2,77.6 88.7,45.6 145,77.6 160,110 -10,110" fill="#28a8ea"/>
  </g>
</g>
<!-- Outlook -->
<g transform="translate(1338,841)">
  <rect x="30" y="0" width="71" height="60" rx="3" fill="#0364b8"/>
  <rect x="30" y="15" width="24.5" height="22" fill="#0078d4"/>
  <rect x="54.5" y="15" width="24.5" height="22" fill="#28a8ea"/>
  <rect x="79" y="15" width="22" height="22" fill="#50d9ff"/>
  <rect x="30" y="37" width="24.5" height="22" fill="#0364b8"/>
  <rect x="54.5" y="37" width="24.5" height="22" fill="#0078d4"/>
  <rect x="79" y="37" width="22" height="22" fill="#28a8ea"/>
  <rect x="30" y="59" width="71" height="16" fill="#0358a7"/>
  <g clip-path="url(#olenv)">

    <polygon points="68.25,73.4 106.5,48 106.5,98.5" fill="#1490df"/>
    <polygon points="25,48 68.25,73.4 106.5,98.5 25,98.5" fill="#28a8ea"/>
    <path d="M68.25 73.4 L106.5 49" stroke="#0a3d86" stroke-width="2.2" opacity="0.8"/>
  </g>
  <rect x="0" y="29" width="55" height="54" rx="4" fill="#0a2767" opacity="0.3" clip-path="url(#olenv2)"/>
  <rect x="0" y="22.6" width="55" height="54" rx="4" fill="url(#olg)"/>
  <path d="M12 49.4 A15.6 16.1 0 1 0 43.2 49.4 A15.6 16.1 0 1 0 12 49.4 Z M19.2 49.4 A8.4 10.3 0 1 0 36 49.4 A8.4 10.3 0 1 0 19.2 49.4 Z" fill="#fff" fill-rule="evenodd"/>
</g>
<!-- SharePoint -->
<g transform="translate(1474.6,841)">
  <circle cx="54.7" cy="28.4" r="28.4" fill="#036c70"/>
  <circle cx="78.7" cy="56" r="27" fill="#1a9ba1"/>
  <circle cx="58.4" cy="82.3" r="20.4" fill="#37c6d0"/>
  <rect x="2" y="27" width="56" height="56" rx="4" fill="#03343a" opacity="0.3" clip-path="url(#spc)"/>
  <rect x="0" y="24.7" width="54.7" height="54" rx="4" fill="url(#spg)"/>
  <text x="0" y="0" transform="translate(27.4,66.6) scale(0.9,1)" font-family="Liberation Sans" font-weight="700" font-size="43" fill="#fff" text-anchor="middle">S</text>
</g>
<!-- Teams -->
<g transform="translate(1611,841)">
  <circle cx="93.3" cy="21" r="11.2" fill="#5059c9"/>
  <path d="M82 37.9 H102.4 A4 4 0 0 1 106.4 41.9 V72.3 A12.2 12.2 0 0 1 82 72.3 Z" fill="#5059c9"/>
  <circle cx="58.3" cy="16" r="16" fill="#7b83eb"/>
  <path d="M30.6 37 H79.8 A4 4 0 0 1 83.8 41 V72.4 A26.6 26.6 0 0 1 30.6 72.4 Z" fill="#7b83eb"/>
  <rect x="2" y="25" width="57" height="56" rx="4" fill="#1f1f6a" opacity="0.3" clip-path="url(#tmc)"/>
  <rect x="0" y="22.5" width="56.8" height="55.5" rx="4" fill="url(#tmg)"/>
  <path d="M15.3 35.4 H39.4 V40.8 H31.3 V64.8 H23.3 V40.8 H15.3 Z" fill="#fff"/>
</g>
</svg>

</body></html>
